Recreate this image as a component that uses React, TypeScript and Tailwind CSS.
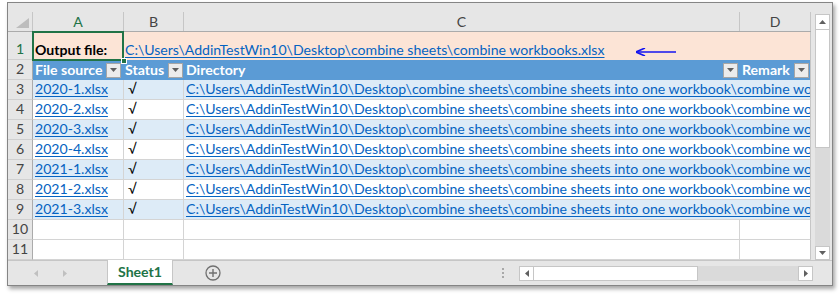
import React from "react";

const FONT = "font-['Lato','Liberation_Sans',sans-serif]";

const files = [
  "2020-1.xlsx",
  "2020-2.xlsx",
  "2020-3.xlsx",
  "2020-4.xlsx",
  "2021-1.xlsx",
  "2021-2.xlsx",
  "2021-3.xlsx",
];

const dirPath =
  "C:\\Users\\AddinTestWin10\\Desktop\\combine sheets\\combine sheets into one workbook\\combine worksheets";

function FilterButton() {
  return (
    <div className="flex h-[15px] w-[15px] shrink-0 items-center justify-center border border-[#a6a6a6] bg-[#ececec]">
      <svg width="7" height="4" viewBox="0 0 7 4">
        <path d="M0 0h7L3.5 4z" fill="#5f5f5f" />
      </svg>
    </div>
  );
}

function RowNum({ n, active }: { n: number; active?: boolean }) {
  return (
    <div
      className={`flex w-[25px] shrink-0 items-end justify-center border-r border-b border-r-[#ababab] border-b-[#d0d0d0] bg-[#e6e6e6] pb-[1px] ${
        active ? "text-[#217346]" : "text-[#444]"
      }`}
    >
      {n}
    </div>
  );
}

function ColHead({ label, w, active }: { label: string; w: string; active?: boolean }) {
  return (
    <div
      className={`flex ${w} shrink-0 items-center justify-center border-r border-[#c6c6c6] ${
        active ? "text-[#217346]" : "text-[#444]"
      }`}
    >
      {label}
    </div>
  );
}

function Link({ children }: { children: React.ReactNode }) {
  return <span className="text-[#0563c1] underline underline-offset-[2px]">{children}</span>;
}

export default function App() {
  return (
    <div className={`h-[298px] w-[840px] bg-white pt-[2px] pl-[7px] text-[14.1px] leading-[18px] ${FONT}`}>
      <div className="flex h-[284px] w-[826px] flex-col border border-[#858585] bg-[#e6e6e6] shadow-[2px_3px_4px_rgba(0,0,0,0.35)]">
        <div className="flex h-[257px]">
          {/* sheet grid */}
          <div className="flex w-[803px] flex-col bg-white">
            <div className="h-[9px] bg-[#e6e6e6]" />

            {/* column headers */}
            <div className="flex h-[20px] border-b border-[#ababab] bg-[#e6e6e6]">
              <div className="flex w-[25px] shrink-0 items-end justify-end border-r border-[#c6c6c6] pr-[3px] pb-[3px]">
                <svg width="13" height="10" viewBox="0 0 13 10">
                  <path d="M13 0v10H0z" fill="#bdbdbd" />
                </svg>
              </div>
              <ColHead label="A" w="w-[91px]" active />
              <ColHead label="B" w="w-[60px]" />
              <ColHead label="C" w="w-[556px]" />
              <ColHead label="D" w="w-[71px]" />
            </div>

            {/* row 1 */}
            <div className="flex h-[28px]">
              <RowNum n={1} active />
              <div className="relative flex w-[91px] shrink-0 items-end bg-[#fce4d6] pb-[1px] pl-[2px] font-bold text-black">
                Output file:
                <div className="absolute -top-[1px] -left-[1px] h-[30px] w-[92px] border-2 border-[#217346]" />
                <div className="absolute -right-[3px] -bottom-[4px] h-[6px] w-[6px] border border-white bg-[#217346]" />
              </div>
              <div className="flex flex-1 items-end border-r border-[#c6c6c6] bg-[#fce4d6] pb-[1px] pl-[1px]">
                <Link>C:\Users\AddinTestWin10\Desktop\combine sheets\combine workbooks.xlsx</Link>
                <svg className="mb-[3px] ml-[31px]" width="40" height="8" viewBox="0 0 40 8">
                  <path d="M1 4h39" stroke="#1414f0" strokeWidth="1.6" />
                  <path d="M0 4l9-4M0 4l9 4" stroke="#1414f0" strokeWidth="1.6" />
                </svg>
              </div>
            </div>

            {/* row 2 - table header */}
            <div className="flex h-[20px]">
              <RowNum n={2} />
              <div className="flex w-[91px] shrink-0 items-center justify-between bg-[#5b9bd5] pr-[3px] pl-[2px] font-bold text-white">
                File source
                <FilterButton />
              </div>
              <div className="flex w-[60px] shrink-0 items-center justify-between bg-[#5b9bd5] pr-[1px] pl-[1px] font-bold text-white">
                Status
                <FilterButton />
              </div>
              <div className="flex w-[556px] shrink-0 items-center justify-between bg-[#5b9bd5] pr-[2px] pl-[2px] font-bold text-white">
                Directory
                <FilterButton />
              </div>
              <div className="flex w-[71px] shrink-0 items-center justify-between border-r border-[#c6c6c6] bg-[#5b9bd5] pr-[1px] pl-[2px] font-bold text-white">
                Remark
                <FilterButton />
              </div>
            </div>

            {/* table rows */}
            {files.map((f, i) => {
              const band = i % 2 === 0 ? "bg-[#ddebf7]" : "bg-white";
              return (
                <div key={f} className="flex h-[20px]">
                  <RowNum n={i + 3} />
                  <div className={`flex w-[91px] shrink-0 items-end border-r border-b border-[#d4d4d4] pb-[1px] pl-[2px] ${band}`}>
                    <Link>{f}</Link>
                  </div>
                  <div className={`flex w-[60px] shrink-0 items-end border-r border-b border-[#d4d4d4] pb-[1px] pl-[4px] text-black ${band}`}>
                    √
                  </div>
                  <div className={`flex w-[627px] shrink-0 items-end overflow-hidden border-r border-b border-r-[#c6c6c6] border-b-[#d4d4d4] pb-[1px] pl-[2px] whitespace-nowrap ${band}`}>
                    <Link>{dirPath}</Link>
                  </div>
                </div>
              );
            })}

            {/* empty rows */}
            {[10, 11].map((n) => (
              <div key={n} className="flex h-[20px]">
                <RowNum n={n} />
                <div className="w-[91px] shrink-0 border-r border-b border-[#d4d4d4]" />
                <div className="w-[60px] shrink-0 border-r border-b border-[#d4d4d4]" />
                <div className="w-[556px] shrink-0 border-r border-b border-[#d4d4d4]" />
                <div className="w-[71px] shrink-0 border-r border-b border-r-[#c6c6c6] border-b-[#d4d4d4]" />
              </div>
            ))}
          </div>

          {/* vertical scrollbar */}
          <div className="flex w-[21px] flex-col pt-[11px] pl-[4px]">
            <div className="flex h-[16px] w-[15px] items-center justify-center border border-[#c6c6c6] bg-white">
              <svg width="7" height="4" viewBox="0 0 7 4">
                <path d="M0 4h7L3.5 0z" fill="#606060" />
              </svg>
            </div>
            <div className="flex h-[217px] w-[15px] flex-col bg-[#dadada]">
              <div className="h-[118px] border border-t-0 border-[#c6c6c6] bg-white" />
            </div>
            <div className="flex h-[14px] w-[15px] items-center justify-center border border-[#c6c6c6] bg-white">
              <svg width="7" height="4" viewBox="0 0 7 4">
                <path d="M0 0h7L3.5 4z" fill="#606060" />
              </svg>
            </div>
          </div>
        </div>

        {/* sheet tabs */}
        <div className="flex h-[25px] items-stretch border-t border-[#c6c6c6]">
          <div className="flex w-[99px] items-center gap-[25px] pl-[26px]">
            <svg width="4" height="7" viewBox="0 0 4 7">
              <path d="M4 0v7L0 3.5z" fill="#c0c0c0" />
            </svg>
            <svg width="4" height="7" viewBox="0 0 4 7">
              <path d="M0 0v7l4-3.5z" fill="#c0c0c0" />
            </svg>
          </div>
          <div className="-mt-[1px] flex w-[66px] items-center justify-center border-x border-b-2 border-x-[#c6c6c6] border-b-[#217346] bg-white pt-[1px] font-bold text-[#217346]">
            Sheet1
          </div>
          <div className="flex w-[80px] items-center justify-center">
            <svg width="16" height="16" viewBox="0 0 16 16">
              <circle cx="8" cy="8" r="7" fill="none" stroke="#707070" strokeWidth="1.3" />
              <path d="M8 4v8M4 8h8" stroke="#707070" strokeWidth="1.4" />
            </svg>
          </div>
          <div className="flex flex-1 items-center justify-end pr-[19px]">
            <div className="mr-[15px] flex flex-col gap-[2px]">
              <div className="h-[2px] w-[2px] bg-[#a8a8a8]" />
              <div className="h-[2px] w-[2px] bg-[#a8a8a8]" />
              <div className="h-[2px] w-[2px] bg-[#a8a8a8]" />
            </div>
            <div className="flex h-[15px] w-[294px]">
              <div className="flex w-[15px] items-center justify-center border border-[#c6c6c6] bg-white">
                <svg width="4" height="7" viewBox="0 0 4 7">
                  <path d="M4 0v7L0 3.5z" fill="#606060" />
                </svg>
              </div>
              <div className="w-[164px] border-y border-r border-[#c6c6c6] bg-white" />
              <div className="flex-1 bg-[#dadada]" />
              <div className="flex w-[15px] items-center justify-center border border-[#c6c6c6] bg-white">
                <svg width="4" height="7" viewBox="0 0 4 7">
                  <path d="M0 0v7l4-3.5z" fill="#606060" />
                </svg>
              </div>
            </div>
          </div>
        </div>
      </div>
    </div>
  );
}
